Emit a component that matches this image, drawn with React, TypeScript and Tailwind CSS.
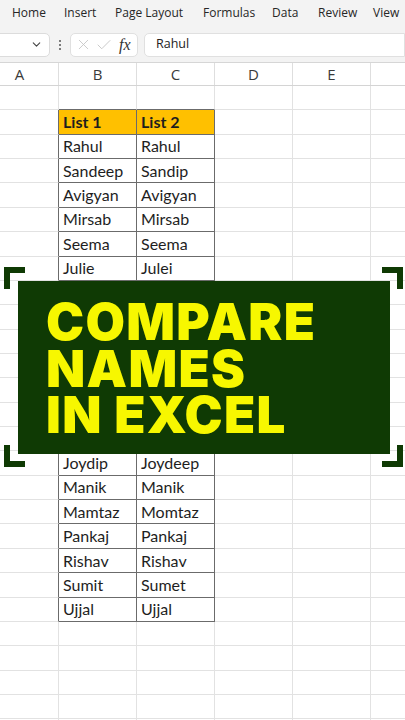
import React from 'react';
import { ChevronDown, X, Check } from 'lucide-react';

const tabs: [string, number][] = [
  ['Home', 52],
  ['Insert', 51],
  ['Page Layout', 88],
  ['Formulas', 69],
  ['Data', 46],
  ['Review', 55],
  ['View', 32],
];
const cols = ['A', 'B', 'C', 'D', 'E', 'F'];

// rows hidden behind the banner are left blank
const list1 = ['Rahul', 'Sandeep', 'Avigyan', 'Mirsab', 'Seema', 'Julie', '', '', '', '', '', '', '', 'Joydip', 'Manik', 'Mamtaz', 'Pankaj', 'Rishav', 'Sumit', 'Ujjal'];
const list2 = ['Rahul', 'Sandip', 'Avigyan', 'Mirsab', 'Seema', 'Julei', '', '', '', '', '', '', '', 'Joydeep', 'Manik', 'Momtaz', 'Pankaj', 'Rishav', 'Sumet', 'Ujjal'];

const TOTAL_ROWS = 27;
const TABLE_FIRST = 1; // header row index
const TABLE_LAST = 21;

const Cell: React.FC<{ row: number; col: number }> = ({ row, col }) => {
  const inTable = row >= TABLE_FIRST && row <= TABLE_LAST;
  const darkRight = inTable && col <= 2;
  const darkBottom = (col === 1 || col === 2) && row >= TABLE_FIRST - 1 && row <= TABLE_LAST;
  const isHeader = row === TABLE_FIRST && (col === 1 || col === 2);

  let text = '';
  if (row === TABLE_FIRST) {
    if (col === 1) text = 'List 1';
    if (col === 2) text = 'List 2';
  } else if (inTable) {
    if (col === 1) text = list1[row - 2];
    if (col === 2) text = list2[row - 2];
  }

  return (
    <div
      className={`w-[78px] shrink-0 h-full flex items-center pl-[4px] border-r border-b text-[16px] text-[#1e1e1e] ${
        darkRight ? 'border-r-[#6b6b6b]' : 'border-r-[#e2e2e2]'
      } ${darkBottom ? 'border-b-[#6b6b6b]' : 'border-b-[#e2e2e2]'} ${
        isHeader ? 'bg-[#ffc000] font-bold' : 'bg-white'
      }`}
    >
      {text}
    </div>
  );
};

const Corner: React.FC<{ className: string }> = ({ className }) => (
  <div className={`absolute w-[21px] h-[22px] border-[#0f3a04] ${className}`} />
);

export default function App() {
  return (
    <div className="relative w-[405px] h-[720px] overflow-hidden bg-white" style={{ fontFamily: 'Lato, "Liberation Sans", sans-serif' }}>
      {/* ribbon tabs */}
      <div className="h-[25px] bg-[#f3f3f3] flex items-center pl-[12px] text-[12px] text-[#262626] whitespace-nowrap" style={{ fontFamily: '"Open Sans", "Noto Sans", sans-serif' }}>
        {tabs.map(([t, w]) => (
          <span key={t} className="shrink-0" style={{ width: w }}>{t}</span>
        ))}
      </div>

      {/* formula bar */}
      <div className="h-[38px] bg-[#f3f3f3] flex items-center border-b border-[#d6d6d6] pt-[2px]" style={{ fontFamily: '"Open Sans", "Noto Sans", sans-serif' }}>
        <div className="-ml-[10px] w-[60px] h-[24px] bg-white border border-[#dcdcdc] rounded-[5px] flex items-center justify-end pr-[6px]">
          <ChevronDown className="w-[13px] h-[13px] text-[#444]" strokeWidth={2} />
        </div>
        <div className="w-[20px] flex flex-col items-center gap-[2px]">
          <span className="w-[2px] h-[2px] bg-[#555] rounded-full" />
          <span className="w-[2px] h-[2px] bg-[#555] rounded-full" />
          <span className="w-[2px] h-[2px] bg-[#555] rounded-full" />
        </div>
        <div className="w-[68px] h-[24px] bg-white border border-[#e0e0e0] rounded-[5px] flex items-center pl-[4px] gap-[3px]">
          <X className="w-[17px] h-[17px] text-[#c4c4c4]" strokeWidth={1.2} />
          <Check className="w-[18px] h-[18px] text-[#c4c4c4]" strokeWidth={1.2} />
          <span className="text-[16px] italic text-[#333] ml-[3px]" style={{ fontFamily: '"Liberation Serif", serif' }}>fx</span>
        </div>
        <div className="ml-[6px] flex-1 h-[24px] bg-white border border-[#e0e0e0] rounded-l-[5px] flex items-center pl-[11px] text-[12.5px] text-[#222]">
          Rahul
        </div>
      </div>

      {/* grid */}
      <div className="-ml-[19px]">
        <div className="h-[23px] flex bg-white border-b border-[#d4d4d4]">
          {cols.map(c => (
            <div key={c} className="w-[78px] shrink-0 flex items-center justify-center border-r border-[#dedede] text-[15px] text-[#3a3a3a]" style={{ fontFamily: '"Open Sans", "Noto Sans", sans-serif' }}>
              {c === 'F' ? '' : c}
            </div>
          ))}
        </div>
        {Array.from({ length: TOTAL_ROWS }).map((_, r) => (
          <div key={r} className="h-[24.36px] flex">
            {cols.map((c, ci) => (
              <Cell key={c} row={r} col={ci} />
            ))}
          </div>
        ))}
      </div>

      {/* title banner */}
      <Corner className="left-[4px] top-[267px] border-l-[6px] border-t-[6px]" />
      <Corner className="left-[382px] top-[267px] border-r-[6px] border-t-[6px]" />
      <Corner className="left-[4px] top-[445px] border-l-[6px] border-b-[6px]" />
      <Corner className="left-[382px] top-[445px] border-r-[6px] border-b-[6px]" />
      <div className="absolute left-[18px] top-[281px] w-[372px] h-[173px] bg-[#0f3a04] pl-[28px] pt-[18px]">
        <div className="text-[#f7f700] text-[51px] leading-[46.5px] font-black tracking-[1.3px]" style={{ fontFamily: 'Inter, "Noto Sans", sans-serif' }}>
          <div>COMPARE</div>
          <div>NAMES</div>
          <div>IN EXCEL</div>
        </div>
      </div>
    </div>
  );
}
